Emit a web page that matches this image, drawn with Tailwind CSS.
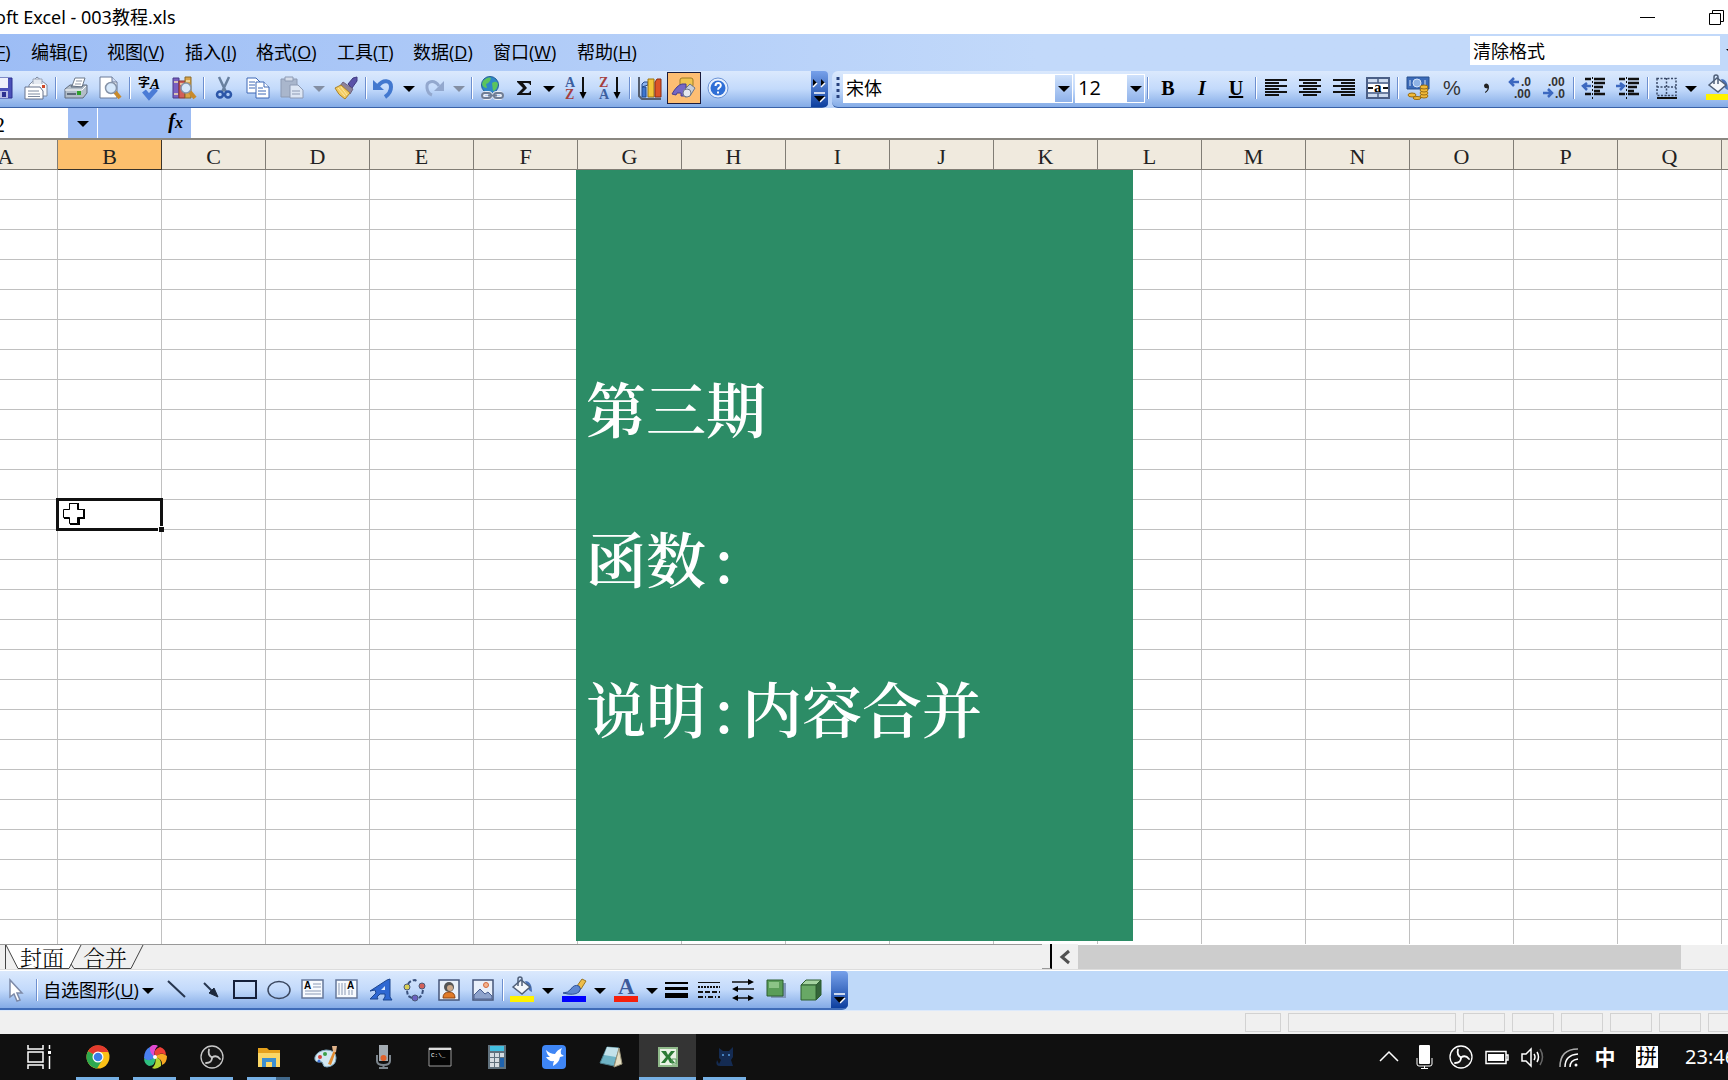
<!DOCTYPE html>
<html lang="zh-CN">
<head>
    <meta charset="UTF-8">
    <meta name="viewport" content="width=device-width, initial-scale=1.0">
    <title>Microsoft Excel - 003教程.xls</title>
    <script src="https://cdn.jsdelivr.net/npm/@tailwindcss/browser@4"></script>
</head>
<body class="h-screen flex flex-col overflow-hidden bg-white text-black font-['Open_Sans','Noto_Sans_CJK_SC',sans-serif] text-lg">
    <!-- Shared shapes -->
    <svg class="hidden">
        <symbol id="dd" viewBox="0 0 24 24"><path d="M6 10h12l-6 6z"/></symbol>
        <symbol id="bucket" viewBox="0 0 24 24">
            <path d="M15 5c5 0 7 4 7 11-3-1-5-4-5-7z" fill="#4a72b8"/>
            <path d="M3 11l8-7 9 7-8 7z" fill="#f4f7fb" stroke="#4f5f78" stroke-width="1.5"/>
            <path d="M8 10V3q0-2 2-2t2 2v7" fill="none" stroke="#4f5f78" stroke-width="1.5"/>
        </symbol>
        <symbol id="obs" viewBox="0 0 24 24">
            <circle cx="12" cy="12" r="11" fill="#161616" stroke="currentColor" stroke-width="1.3"/>
            <g fill="none" stroke="currentColor" stroke-width="1.8" stroke-linecap="round">
                <path d="M12 12.500Q7.500 10 9 4.500"/>
                <path d="M12 12.500Q16.500 9.500 20 14"/>
                <path d="M12 12.500Q12 18 6 18"/>
            </g>
        </symbol>
    </svg>

    <!-- Title bar -->
    <header class="h-[34px] shrink-0 flex items-center">
        <h1 class="-ml-[5px] whitespace-nowrap font-['Noto_Sans','Noto_Sans_CJK_SC',sans-serif] text-lg">oft Excel - 003教程.xls</h1>
        <button aria-label="最小化" class="ml-auto w-[82px]"><svg class="size-4 mx-auto" viewBox="0 0 16 16"><path d="M0 8.5h15" stroke="#000"/></svg></button>
        <button aria-label="还原" class="w-[39px] pl-5"><svg class="size-4" viewBox="0 0 16 16" fill="none" stroke="#000"><path d="M.5 4.500h11v11h-11zM3.500 4.500v-3h11v11h-3"/></svg></button>
    </header>

    <!-- Menu bar -->
    <div class="h-[37px] shrink-0 flex items-center bg-linear-to-r from-[#9dbdf5] to-[#c2d9fa] to-60% overflow-hidden">
        <nav class="grid grid-cols-[31px_76px_78px_71px_81px_76px_80px_84px_auto] pb-[2px] whitespace-nowrap [&>button]:text-left [&>button]:text-lg">
            <button class="-ml-1"><u>F</u>)</button>
            <button>编辑(<u>E</u>)</button>
            <button>视图(<u>V</u>)</button>
            <button>插入(<u>I</u>)</button>
            <button>格式(<u>O</u>)</button>
            <button>工具(<u>T</u>)</button>
            <button>数据(<u>D</u>)</button>
            <button>窗口(<u>W</u>)</button>
            <button>帮助(<u>H</u>)</button>
        </nav>
        <div class="ml-auto flex h-[29px] -mt-1 w-[258px]">
            <input aria-label="键入需要帮助的问题" value="清除格式" class="w-[250px] h-full bg-white pl-[3px] pb-[2px]">
            <button aria-label="问题列表" class="w-2 bg-[#c2d9fa] overflow-hidden"><svg class="size-6"><use href="#dd"/></svg></button>
        </div>
    </div>

    <!-- Toolbars -->
    <div class="h-[37px] shrink-0 flex overflow-hidden bg-[#b9d2f8] [&_button]:shrink-0 [&_button]:h-8 [&_button]:flex [&_button]:items-center [&_button]:justify-center [&_svg]:size-6 [&_svg]:shrink-0 [&_svg]:overflow-visible [&_hr]:w-[2px] [&_hr]:h-[22px] [&_hr]:mx-[2px] [&_hr]:shrink-0 [&_hr]:border-0 [&_hr]:border-l [&_hr]:border-r [&_hr]:border-l-[#6d8fcf] [&_hr]:border-r-white">
        <div class="-ml-[15px] w-[843px] shrink-0 flex items-center pb-[2px] rounded-r-md border-b border-[#3a62a8] bg-linear-to-b from-[#dbe9fd] via-[#c3dafb] to-[#84abe6]">
            <button class="w-[34px]" aria-label="保存"><svg viewBox="0 0 24 24"><path d="M1 2h21v20H3l-2-2z" fill="#4a50b8" stroke="#2d3190"/><path d="M5 2h13v10H5z" fill="#eef0fb"/><path d="M6 15h12v7H6z" fill="#b9bee6"/><path d="M12 16h4v5h-4z" fill="#2d3190"/></svg></button>
            <button class="w-[34px]" aria-label="电子邮件"><svg viewBox="0 0 24 24"><path d="M5 9l8-8 10 8v11H5z" fill="#f6f8fb" stroke="#7d8aa0"/><path d="M9 8V3h9v5" fill="#e4e9f1" stroke="#9aa5b8"/><path d="M18 9h3v3h-3z" fill="#cf4a2a"/><path d="M1 11h15l3 4v8H1z" fill="#fff" stroke="#66738c"/><path d="M4 15h11M4 18h12M4 20.500h12" stroke="#7d8aa0"/></svg></button>
            <hr>
            <button class="w-[34px]" aria-label="打印"><svg viewBox="0 0 24 24"><path d="M8 10l3-8h10l-3 9z" fill="#fff" stroke="#6e7a8a"/><path d="M12 5h6M11 8h6" stroke="#8b95a5"/><path d="M1 13l5-4h2l-1 2h11l1-2h4v8l-4 5H1z" fill="#b3bec9" stroke="#5f6b7c"/><path d="M1 14h17l4-4" fill="none" stroke="#fff"/><path d="M3 17h9v2H3z" fill="#5e6a7a"/><path d="M13 15h4v4h-4z" fill="#2fa02c"/></svg></button>
            <button class="w-[34px]" aria-label="打印预览"><svg viewBox="0 0 24 24"><path d="M2 1h12l5 5v16H2z" fill="#fff" stroke="#6a7a98"/><path d="M14 1v5h5" fill="#cfdaf0" stroke="#6a7a98"/><path d="M17 16l5 6" stroke="#c98a2b" stroke-width="4"/><circle cx="13" cy="12" r="5.500" fill="#d6e8fb" stroke="#8593a8" stroke-width="1.500"/></svg></button>
            <hr>
            <button class="w-[34px]" aria-label="拼写检查"><svg viewBox="0 0 24 24"><path d="M6 15l5 6 7-8" fill="none" stroke="#4b7cd6" stroke-width="5"/><text x="0" y="11" font-size="12" font-weight="700" font-family="Noto Sans CJK SC">字</text><text x="12" y="13" font-size="15" font-weight="700" font-style="italic" font-family="Liberation Serif">A</text></svg></button>
            <button class="w-[34px]" aria-label="信息检索"><svg viewBox="0 0 24 24"><path d="M1 2h6v20H1z" fill="#7a5fc0" stroke="#493a88"/><path d="M7 5h6v17H7z" fill="#d2605a" stroke="#8b332f"/><path d="M13 1h6v21h-6z" fill="#d9a348" stroke="#8a6a28"/><path d="M2 6h4M2 18h4M14 5h4M8 8h4" stroke="#f5e3b0" stroke-width="1.500"/><path d="M18 16l5 6" stroke="#c98a2b" stroke-width="4"/><circle cx="14" cy="12" r="5" fill="#d6e8fb" stroke="#8593a8" stroke-width="1.500"/></svg></button>
            <hr>
            <button class="w-[34px]" aria-label="剪切"><svg viewBox="0 0 24 24" fill="none"><path d="M7 1l7 15M17 1l-7 15" stroke="#68809f" stroke-width="2.500"/><circle cx="8" cy="18.500" r="3" stroke="#2c56a8" stroke-width="2.500"/><circle cx="16" cy="18.500" r="3" stroke="#2c56a8" stroke-width="2.500"/></svg></button>
            <button class="w-[34px]" aria-label="复制"><svg viewBox="0 0 24 24" fill="#fff" stroke="#3f68b5"><path d="M1 2h9l4 4v11H1z"/><path d="M3 6h6M3 9h6M3 12h6"/><path d="M10 6h8l5 5v11H10z"/><path d="M18 6v5h5M12 12h5M12 15h8M12 18h8"/></svg></button>
            <button class="w-[34px]" aria-label="粘贴"><svg viewBox="0 0 24 24" stroke="#8d9ab3"><path d="M1 3h16v18H1z" fill="#a9b6cc"/><path d="M5 1h8v4H5z" fill="#d3dbe9"/><path d="M10 9h8l5 5v8H10z" fill="#dde6f4"/><path d="M12 15h8M12 18h8"/></svg></button>
            <button class="w-5 text-[#848fa3]" aria-label="粘贴选项"><svg fill="currentColor"><use href="#dd"/></svg></button>
            <button class="w-[34px]" aria-label="格式刷"><svg viewBox="0 0 24 24"><path d="M14 8l5-6 4-1v4l-5 7z" fill="#5a52a8" stroke="#403a80"/><path d="M9 6l10 7-3 5-10-8z" fill="#8f8399" stroke="#6d6380"/><path d="M1 12l6-3 9 8-5 6q-7-4-10-11z" fill="#f3cc62" stroke="#a9822c"/><path d="M4 12l7 8M7 11l6 8" stroke="#fbe6a2"/></svg></button>
            <hr>
            <button class="w-[30px]" aria-label="撤消"><svg viewBox="0 0 24 24"><path d="M6 10c5-7 13-6 13 1 0 5-3 8-6 10" fill="none" stroke="#4278cf" stroke-width="4"/><path d="M1 4v10h11z" fill="#4278cf"/></svg></button>
            <button class="w-5" aria-label="撤消列表"><svg><use href="#dd"/></svg></button>
            <button class="w-[30px]" aria-label="恢复"><svg viewBox="0 0 24 24"><path d="M17 10C12 3 4 5 5 12c.5 4 2 6 5 7" fill="none" stroke="#93a8ce" stroke-width="3"/><path d="M22 5v10H12z" fill="#93a8ce"/></svg></button>
            <button class="w-5 text-[#848fa3]" aria-label="恢复列表"><svg fill="currentColor"><use href="#dd"/></svg></button>
            <hr>
            <button class="w-[34px]" aria-label="超链接"><svg viewBox="0 0 24 24"><circle cx="10" cy="9" r="8.500" fill="#2f86c8" stroke="#226096"/><path d="M3 5q5-5 8-3-1 5-5 6l1 4q-4 0-5-4zM12 7q5-3 6 1-1 6-5 7z" fill="#5cc45c"/><g fill="none" stroke="#e8edf6" stroke-width="4"><rect x="3" y="17" width="8" height="5" rx="2.500"/><rect x="14" y="17" width="8" height="5" rx="2.500"/></g><g fill="none" stroke="#6f7d95" stroke-width="2"><rect x="2" y="17" width="9" height="5" rx="2.500"/><rect x="14" y="17" width="9" height="5" rx="2.500"/><path d="M8 19.500h9"/></g></svg></button>
            <button class="w-[30px]" aria-label="自动求和"><svg viewBox="0 0 24 24"><path d="M5 5h14v4h-1q0-2-3-2h-4l4 5-5 5h6q2 0 2-2h1v4H5v-1l6-6-6-6z" fill="#111"/></svg></button>
            <button class="w-5" aria-label="函数列表"><svg><use href="#dd"/></svg></button>
            <button class="w-[34px]" aria-label="升序排序"><svg viewBox="0 0 24 24" font-family="Liberation Serif" font-weight="700" font-size="14"><text x="1" y="11" fill="#3c5f9f">A</text><text x="1" y="23" fill="#a53f3f">Z</text><path d="M19 1v18" stroke="#111" stroke-width="2" fill="none"/><path d="M15.500 16h7L19 23z"/></svg></button>
            <button class="w-[34px]" aria-label="降序排序"><svg viewBox="0 0 24 24" font-family="Liberation Serif" font-weight="700" font-size="14"><text x="1" y="11" fill="#a53f3f">Z</text><text x="1" y="23" fill="#3c5f9f">A</text><path d="M19 1v18" stroke="#111" stroke-width="2" fill="none"/><path d="M15.500 16h7L19 23z"/></svg></button>
            <hr>
            <button class="w-[34px]" aria-label="图表向导"><svg viewBox="0 0 24 24"><path d="M1 1v19l3 3h19" fill="none" stroke="#555f70" stroke-width="2"/><path d="M4 11h4v10H4z" fill="#3d76cf" stroke="#234a8c"/><path d="M4 11V8l2-2h4v3z" fill="#8db4ee" stroke="#234a8c"/><path d="M10 3h6v18h-6z" fill="#f3c63a" stroke="#9b7412"/><path d="M17 6l2-3h4v18h-6z" fill="#dd5428" stroke="#8a2d10"/></svg></button>
            <button class="w-[34px] border border-[#1c1c3c] bg-[#fdbe73]" aria-label="绘图" aria-pressed="true"><svg viewBox="0 0 24 24"><rect x="8" y="2" width="13" height="9" rx="2" fill="#efc550" stroke="#9b7b26"/><path d="M0 18Q5 9 10 8h4v12H9v-3H5l-1 2z" fill="#7568c4" stroke="#483e90"/><path d="M12 14l6-6 5 4-5 8-5 1z" fill="#c6cedb" stroke="#6c7688"/><circle cx="15" cy="17" r="4" fill="#e4e8ef" stroke="#6c7688"/></svg></button>
            <button class="w-[34px]" aria-label="帮助"><svg viewBox="0 0 24 24"><circle cx="12" cy="12" r="10" fill="#e7f0fd" stroke="#6b93d6"/><circle cx="12" cy="12" r="7.500" fill="#2f6fd6"/><path d="M9.500 10q0-3 2.700-3t2.600 2.500q0 1.500-1.700 2.300-1 .6-1 1.900M12 15.500v2" stroke="#fff" stroke-width="2" fill="none"/></svg></button>
            <button class="ml-auto h-[36px]! -mb-[2px] w-[17px] rounded-r bg-linear-to-b from-[#77a1ea] to-[#0c3f9f]" aria-label="工具栏选项"><svg viewBox="0 0 24 30" class="h-[30px]!"><path d="M5 5l4 4-4 4zM13 5l4 4-4 4z"/><path d="M5 13l4-4M13 13l4-4M6 19h11" stroke="#fff" stroke-width="1.500"/><path d="M6 22h11l-5.500 6z"/><path d="M12 28l5-5" stroke="#fff" stroke-width="1.500"/></svg></button>
        </div>
        <div class="ml-1 flex-1 min-w-0 overflow-hidden flex items-center pb-[2px] rounded-l-md border-b border-[#3a62a8] bg-linear-to-b from-[#dbe9fd] via-[#c3dafb] to-[#84abe6]">
            <span class="w-[11px] shrink-0"><svg class="w-[11px]!" viewBox="0 0 11 24"><path d="M6 1v21" stroke="#27417c" stroke-width="3" stroke-dasharray="3 3"/></svg></span>
            <div class="relative w-[230px] shrink-0 h-[29px] bg-white">
                <select aria-label="字体" class="appearance-none size-full pl-[3px] pb-[2px]"><option>宋体</option></select>
                <span class="absolute right-px top-px h-[27px] w-[17px] flex items-center justify-center bg-linear-to-b from-[#cfe1fb] to-[#8fb2ea] pointer-events-none"><svg><use href="#dd"/></svg></span>
            </div>
            <div class="relative ml-[2px] w-[70px] shrink-0 h-[29px] bg-white">
                <select aria-label="字号" class="appearance-none size-full pl-[3px] pb-[2px] text-xl"><option>12</option></select>
                <span class="absolute right-px top-px h-[27px] w-[17px] flex items-center justify-center bg-linear-to-b from-[#cfe1fb] to-[#8fb2ea] pointer-events-none"><svg><use href="#dd"/></svg></span>
            </div>
            <hr>
            <button class="w-[34px] font-['Liberation_Serif',serif] text-xl" aria-label="加粗"><b>B</b></button>
            <button class="w-[34px] font-['Liberation_Serif',serif] font-bold text-xl" aria-label="倾斜"><i>I</i></button>
            <button class="w-[34px] font-['Liberation_Serif',serif] font-bold text-xl" aria-label="下划线"><u>U</u></button>
            <hr>
            <button class="w-[34px]" aria-label="左对齐"><svg viewBox="0 0 24 24" stroke="#111" stroke-width="2"><path d="M1 4h22M1 7h14M1 10h22M1 13h14M1 16h22M1 19h14"/></svg></button>
            <button class="w-[34px]" aria-label="居中"><svg viewBox="0 0 24 24" stroke="#111" stroke-width="2"><path d="M1 4h22M5 7h14M1 10h22M5 13h14M1 16h22M5 19h14"/></svg></button>
            <button class="w-[34px]" aria-label="右对齐"><svg viewBox="0 0 24 24" stroke="#111" stroke-width="2"><path d="M1 4h22M9 7h14M1 10h22M9 13h14M1 16h22M9 19h14"/></svg></button>
            <button class="w-[34px]" aria-label="合并及居中"><svg viewBox="0 0 24 24"><path d="M1 2h22v20H1z" fill="#cbd9ee" stroke="#4b5f86" stroke-width="2"/><path d="M1 7h22M1 17h22M12 2v5M12 17v5" stroke="#4b5f86" stroke-width="1.500"/><path d="M2 8h20v8H2z" fill="#fff"/><path d="M2 12h5M17 12h5" stroke="#111" stroke-width="2"/><text x="8" y="16" font-size="15" font-weight="700" font-family="Liberation Serif">a</text></svg></button>
            <hr>
            <button class="w-[34px]" aria-label="货币样式"><svg viewBox="0 0 24 24"><path d="M1 1h22v12H1z" fill="#3b6ab8" stroke="#28508f"/><circle cx="11" cy="7" r="4" fill="#8fb3e6" stroke="#d2e2f8"/><path d="M4 4v6M19 4v6" stroke="#d2e2f8"/><g fill="#f0b93a" stroke="#9a6d12"><ellipse cx="18" cy="20" rx="4" ry="2"/><ellipse cx="18" cy="17" rx="4" ry="2"/><ellipse cx="18" cy="14" rx="4" ry="2"/><ellipse cx="18" cy="11" rx="4" ry="2"/><ellipse cx="6" cy="19" rx="4" ry="2"/><ellipse cx="11" cy="22" rx="4" ry="1.500"/></g></svg></button>
            <button class="w-[34px] text-[#333] text-xl font-['Liberation_Sans',sans-serif]" aria-label="百分比样式">%</button>
            <button class="w-[34px]" aria-label="千位分隔样式"><svg viewBox="0 0 24 24"><path d="M11 16q3-2 2.500-4-3 1-3.500-2 0-2.500 2.500-2.500 2.500.500 2.500 3.500 0 4-4 6z" fill="#222"/></svg></button>
            <button class="w-[34px]" aria-label="增加小数位数"><svg viewBox="0 0 24 24" font-family="Liberation Sans" font-size="12" font-weight="700" fill="#333"><text x="13" y="10">.0</text><text x="6" y="22">.00</text><path d="M11 6H3M6 2L2 6l4 4" stroke="#3c68c0" stroke-width="2.500" fill="none"/></svg></button>
            <button class="w-[34px]" aria-label="减少小数位数"><svg viewBox="0 0 24 24" font-family="Liberation Sans" font-size="12" font-weight="700" fill="#333"><text x="6" y="10">.00</text><text x="13" y="22">.0</text><path d="M1 17h8M6 13l4 4-4 4" stroke="#3c68c0" stroke-width="2.500" fill="none"/></svg></button>
            <hr>
            <button class="w-[34px]" aria-label="减少缩进量"><svg viewBox="0 0 24 24"><path d="M3 3h6M12 3h11M12 7h11M12 11h9M12 15h6M3 18h6M12 18h11" stroke="#111" stroke-width="2.500"/><path d="M10.500 1v22" stroke="#111" stroke-dasharray="2 2"/><path d="M9 10H2M5 7l-4 3 4 4" stroke="#3c68c0" stroke-width="2.500" fill="none"/></svg></button>
            <button class="w-[34px]" aria-label="增加缩进量"><svg viewBox="0 0 24 24"><path d="M3 3h6M12 3h11M12 7h11M12 11h9M12 15h6M3 18h6M12 18h11" stroke="#111" stroke-width="2.500"/><path d="M10.500 1v22" stroke="#111" stroke-dasharray="2 2"/><path d="M0 10h7M4 7l4 3-4 4" stroke="#3c68c0" stroke-width="2.500" fill="none"/></svg></button>
            <hr>
            <button class="w-[30px]" aria-label="边框"><svg viewBox="0 0 24 24" fill="none"><path d="M3 2.500h19v17H3zM12.500 2v18M3 11h19" stroke="#3a4a68" stroke-width="1.500" stroke-dasharray="2 1.500"/><path d="M3 22h20" stroke="#111" stroke-width="2"/></svg></button>
            <button class="w-5" aria-label="边框选项"><svg><use href="#dd"/></svg></button>
            <button class="w-[34px]" aria-label="填充颜色"><svg viewBox="0 0 24 24"><use href="#bucket" y="-2"/><path d="M0 18h24v6H0z" fill="#fff200"/></svg></button>
        </div>
    </div>

    <!-- Formula bar -->
    <div class="h-[30px] shrink-0 flex bg-[#9dbcf3] font-['Liberation_Serif',serif] text-[22px] overflow-hidden">
        <input aria-label="名称框" value="2" class="w-[68px] -indent-[6px] bg-white pt-1">
        <button aria-label="名称列表" class="w-[29px] flex items-center justify-center"><svg class="size-6"><use href="#dd"/></svg></button>
        <button aria-label="插入函数" class="w-[94px] border-l border-white text-right pr-2 pb-px leading-none text-[20px] font-bold"><i>f<span class="text-base">x</span></i></button>
        <input aria-label="编辑栏" class="flex-1 min-w-0 bg-white">
    </div>

    <!-- Worksheet -->
    <main class="relative flex-1 min-h-0 overflow-hidden border-t-2 border-[#8a8780]">
        <table id="grid" class="-ml-[46px] w-[2704px] table-fixed border-separate border-spacing-0">
            <thead><tr id="cols"></tr></thead>
            <tbody id="rows"></tbody>
        </table>
        <section class="absolute left-[576px] top-[30px] w-[557px] h-[771px] bg-[#2c8c66] pt-[162px] pl-[10px] text-white font-semibold text-[60px] leading-[150px] whitespace-nowrap font-['Noto_Serif_CJK_SC','Noto_Sans_CJK_SC',serif] [&_span]:inline-block [&_span]:w-9 [&_span]:text-center">
            <p>第三期</p>
            <p>函数<span>:</span></p>
            <p>说明<span>:</span>内容合并</p>
        </section>
        <div class="absolute left-14 top-[358px] w-[107px] h-[33px] border-3 border-[#111]">
            <span class="absolute -right-[4px] -bottom-[4px] size-[6px] bg-[#111] border-t border-l border-white"></span>
            <svg class="absolute left-[3px] top-px size-6" viewBox="0 0 24 24"><path d="M7 1h10v6h6v10h-5v6H8v-6H2V7h5z" fill="#000"/><path d="M7.500 1.500h8v6h6v8h-6v6h-8v-6h-6v-8h6z" fill="#fff" stroke="#000"/></svg>
        </div>
    </main>

    <!-- Sheet tabs and horizontal scroll bar -->
    <div class="h-[25px] shrink-0 flex bg-[#f0f0f0]">
        <nav class="relative w-[60.3%] border-t border-[#999] flex font-['Noto_Serif_CJK_SC','Noto_Sans_CJK_SC',serif] font-light text-[22px] leading-6">
            <svg class="absolute left-0 top-0 w-[150px] h-6" viewBox="0 0 150 24" fill="none" stroke="#444"><path d="M6 0l12 23.500h51L81 0z" fill="#fff" stroke="none"/><path d="M5.500 0v24M6 0l12 23.500h51L81 0M71 19l3 4.500h57L143 0"/></svg>
            <button class="relative ml-5 h-6 w-[63px] text-left">封面</button>
            <button class="relative h-6 w-[62px] text-left">合并</button>
        </nav>
        <div class="w-[10px] shrink-0 border-r-2 border-black bg-[#f0f0f0] border-b border-b-[#999]"></div>
        <button aria-label="向左滚动" class="w-[26px] shrink-0 flex items-center justify-center"><svg class="size-4" viewBox="0 0 16 16"><path d="M12 2L5 8l7 6" fill="none" stroke="#505050" stroke-width="3"/></svg></button>
        <div class="flex-1 border-t border-white"><div class="w-[92.8%] h-full bg-[#cdcdcd]"></div></div>
    </div>
    <div class="h-[2px] shrink-0 bg-white border-t border-[#ddd]"></div>

    <!-- Drawing toolbar -->
    <div class="h-10 shrink-0 flex bg-[#bfd9f9] border-b border-[#dce9fb] overflow-hidden [&_button]:shrink-0 [&_button]:h-8 [&_button]:flex [&_button]:items-center [&_button]:justify-center [&_svg]:size-6 [&_svg]:shrink-0 [&_svg]:overflow-visible [&_hr]:w-[2px] [&_hr]:h-[22px] [&_hr]:mx-[2px] [&_hr]:shrink-0 [&_hr]:border-0 [&_hr]:border-l [&_hr]:border-r [&_hr]:border-l-[#6d8fcf] [&_hr]:border-r-white">
        <div class="w-[848px] shrink-0 flex items-center rounded-r-md border-b-2 border-[#3f6cb8] bg-linear-to-b from-[#dbe9fd] via-[#c3dafb] to-[#84abe6]">
            <button class="w-[34px]" aria-label="选择对象"><svg viewBox="0 0 24 24"><path d="M5 2v17l4-3 3 7 3-1-3-7h5z" fill="#fff" stroke="#7d8aa8" stroke-width="1.500"/></svg></button>
            <hr>
            <button class="w-[120px] whitespace-nowrap">自选图形(<u>U</u>)<svg class="-mx-[3px]"><use href="#dd"/></svg></button>
            <button class="w-[34px]" aria-label="直线"><svg viewBox="0 0 24 24"><path d="M3 3l17 16" stroke="#27364f" stroke-width="2"/></svg></button>
            <button class="w-[34px]" aria-label="箭头"><svg viewBox="0 0 24 24"><path d="M5 5l8 8" stroke="#27364f" stroke-width="2"/><path d="M19 19l-9-4 5-5z" fill="#1c283c" stroke="#1c283c"/></svg></button>
            <button class="w-[34px]" aria-label="矩形"><svg viewBox="0 0 24 24"><path d="M1 3h22v17H1z" fill="none" stroke="#15203a" stroke-width="2"/></svg></button>
            <button class="w-[34px]" aria-label="椭圆"><svg viewBox="0 0 24 24"><ellipse cx="12" cy="12" rx="11" ry="8.500" fill="none" stroke="#3a475f" stroke-width="1.500"/></svg></button>
            <button class="w-[34px]" aria-label="文本框"><svg viewBox="0 0 24 24"><path d="M1 2h21v18H1z" fill="#f7fafe" stroke="#66789a" stroke-width="1.500"/><path d="M12 6h8M12 9h8M4 13h16M4 16h16" stroke="#8b9ab5"/><text x="3" y="11" font-size="10" font-weight="700" font-family="Liberation Sans">A</text></svg></button>
            <button class="w-[34px]" aria-label="竖排文本框"><svg viewBox="0 0 24 24"><path d="M1 2h21v18H1z" fill="#f7fafe" stroke="#66789a" stroke-width="1.500"/><path d="M4 5v12M7 5v12M10 5v12M14 12v5M17 12v5" stroke="#8b9ab5"/><text x="12" y="11" font-size="10" font-weight="700" font-family="Liberation Sans">A</text></svg></button>
            <button class="w-[34px]" aria-label="插入艺术字"><svg viewBox="0 0 24 24"><path d="M1 13L18 2l3-1v18l2 3h-9l2-3v-3h-5l-3 3 1 2H1l6-6-1-3z" fill="#2f68d2" stroke="#1d468f"/><path d="M12 12l4-4v4z" fill="#dbe9fd"/></svg></button>
            <button class="w-[34px]" aria-label="插入组织结构图"><svg viewBox="0 0 24 24"><path d="M5 6q3-4 7-4l3 2M20 12l-1 5-3 3M9 20l-4-2-1-5" fill="none" stroke="#39507c" stroke-width="2" stroke-dasharray="4 2"/><circle cx="4" cy="9" r="3" fill="#d9cf56" stroke="#4a5878"/><circle cx="19" cy="8" r="3" fill="#d2605a" stroke="#4a5878"/><circle cx="12" cy="20" r="3" fill="#6a60c0" stroke="#4a5878"/></svg></button>
            <button class="w-[34px]" aria-label="插入剪贴画"><svg viewBox="0 0 24 24"><path d="M2 2h20v20H2z" fill="#e9f0fa" stroke="#46567a" stroke-width="1.500"/><circle cx="12" cy="9" r="5" fill="#555"/><circle cx="13" cy="10" r="3" fill="#cda98a"/><path d="M6 20q0-6 6-6t6 6z" fill="#e07a28" stroke="#8c4310"/></svg></button>
            <button class="w-[34px]" aria-label="插入图片"><svg viewBox="0 0 24 24"><path d="M2 2h20v20H2z" fill="#e9f0fa" stroke="#46567a" stroke-width="1.500"/><path d="M3 17l6-6 5 5 3-2 4 4v3H3z" fill="#8ea3cc" stroke="#4a5f90"/><circle cx="15" cy="7" r="2.500" fill="#f2b48f" stroke="#d4683a"/></svg></button>
            <hr>
            <button class="w-8" aria-label="填充颜色"><svg viewBox="0 0 24 24"><use href="#bucket" y="-2"/><path d="M0 18h24v6H0z" fill="#fff200"/></svg></button>
            <button class="w-5" aria-label="填充选项"><svg><use href="#dd"/></svg></button>
            <button class="w-8" aria-label="线条颜色"><svg viewBox="0 0 24 24"><path d="M15 8l5-7 4 2-5 8z" fill="#edbd4a" stroke="#9a7420"/><path d="M1 15q5 0 8-4 3-5 8-3 3 3 0 6-5 4-16 1z" fill="#5e86cf" stroke="#2f5296"/><path d="M0 18h24v6H0z" fill="#00f"/></svg></button>
            <button class="w-5" aria-label="线条选项"><svg><use href="#dd"/></svg></button>
            <button class="w-8" aria-label="字体颜色"><svg viewBox="0 0 24 24"><text x="4" y="16" font-size="23" font-weight="700" font-family="Liberation Serif" fill="#3b5a9a">A</text><path d="M0 18h24v6H0z" fill="#f5200c"/></svg></button>
            <button class="w-5" aria-label="字体颜色选项"><svg><use href="#dd"/></svg></button>
            <button class="w-[30px]" aria-label="线型"><svg viewBox="0 0 24 24"><path d="M0 4h23v2H0zM0 9h23v3H0zM0 15h23v5H0z"/></svg></button>
            <button class="w-[34px]" aria-label="虚线线型"><svg viewBox="0 0 24 24" stroke="#111"><path d="M1 4.500h22"/><path d="M1 9h22" stroke-width="2" stroke-dasharray="2 1"/><path d="M1 14h22" stroke-width="2" stroke-dasharray="5 2"/><path d="M1 19h22" stroke-width="2" stroke-dasharray="5 2 1 2"/></svg></button>
            <button class="w-[34px]" aria-label="箭头样式"><svg viewBox="0 0 24 24"><path d="M1 4h20M3 11h20M3 20h18" stroke="#111" stroke-width="1.500"/><path d="M23 4l-6-3v6zM1 11l6-3v6zM1 20l6-3v6zM23 20l-6-3v6z"/></svg></button>
            <button class="w-[34px]" aria-label="阴影样式"><svg viewBox="0 0 24 24"><path d="M6 5h15v15H6z" fill="#7f96ba"/><path d="M2 2h16v16H2z" fill="#5a9d58" stroke="#2d5f30"/><path d="M4 4h10v6H4z" fill="#8cc487"/></svg></button>
            <button class="w-[34px]" aria-label="三维效果样式"><svg viewBox="0 0 24 24" stroke="#2d5f30"><path d="M2 7l5-5h15l-5 5z" fill="#a5d3a0"/><path d="M17 7l5-5v15l-5 5z" fill="#35653a"/><path d="M2 7h15v15H2z" fill="#68a865"/></svg></button>
            <button class="ml-auto h-full! w-[17px] rounded-r bg-linear-to-b from-[#77a1ea] to-[#0c3f9f]" aria-label="工具栏选项"><svg viewBox="0 0 24 30" class="h-[30px]!"><path d="M6 19h11" stroke="#fff" stroke-width="1.500"/><path d="M6 22h11l-5.500 6z"/><path d="M12 28l5-5" stroke="#fff" stroke-width="1.500"/></svg></button>
        </div>
    </div>

    <!-- Status bar -->
    <footer class="h-[23px] shrink-0 flex justify-end gap-[7px] py-[2px] bg-[#f0f0f0] overflow-hidden [&>span]:border [&>span]:border-[#d2d2d2] [&>span]:shrink-0">
        <span class="w-9"></span>
        <span class="w-[168px]"></span>
        <span class="w-[42px]"></span>
        <span class="w-[42px]"></span>
        <span class="w-[42px]"></span>
        <span class="w-[42px]"></span>
        <span class="w-[42px]"></span>
        <span class="w-[42px] -mr-[22px]"></span>
    </footer>

    <!-- Windows taskbar -->
    <div class="h-[46px] shrink-0 flex bg-[#101010] text-white overflow-hidden">
        <div class="flex [&>button]:w-[57px] [&>button]:relative [&>button]:flex [&>button]:items-center [&>button]:justify-center [&_svg]:size-6 [&_i]:absolute [&_i]:bottom-0 [&_i]:h-[3px] [&_i]:w-[43px] [&_i]:bg-[#76b0e4]">
            <button class="ml-[10px] mr-[2px]" aria-label="任务视图"><svg viewBox="0 0 24 24" fill="none" stroke="#fff" stroke-width="1.500"><path d="M1 0v4h15V0M1 7h15v10H1zM1 24v-4h15v4M22.500 0v4M22.500 11v13"/><path d="M21 6h3v3h-3z" fill="#fff" stroke="none"/></svg></button>
            <button aria-label="Chrome"><svg viewBox="0 0 24 24"><circle cx="12" cy="12" r="11.500" fill="#fbc116"/><path d="M12 12L2 6.300A11.500 11.500 0 0 1 22.500 7H12z" fill="#e33b2e"/><path d="M12 12L2 6.300A11.500 11.500 0 0 0 11 23.500l5.500-9z" fill="#2da94f"/><circle cx="12" cy="12" r="5.500" fill="#fff"/><circle cx="12" cy="12" r="4.300" fill="#3b7de8"/></svg><i></i></button>
            <button aria-label="照片"><svg viewBox="0 0 24 24"><path d="M12 12Q4 10 7 2q4-4 8-1-5 4-3 11z" fill="#e24ad0"/><path d="M12 12Q10 4 17 2q6 2 6 8-5-4-11 2z" fill="#ee4038"/><path d="M12 12q6-6 12-1 0 7-5 9 1-6-7-8z" fill="#f7a823"/><path d="M12 12q7 1 6 9-5 4-9 2 5-4 3-11z" fill="#b5d632"/><path d="M12 12q1 9-6 9-5-2-5-8 5 4 11-1z" fill="#2fc080"/><path d="M12 12q-6 6-11 1 0-8 6-11-1 6 5 10z" fill="#4a80f0"/><circle cx="12" cy="12" r="2" fill="#fff"/></svg><i></i></button>
            <button class="text-[#c8c8c8]" aria-label="OBS"><svg><use href="#obs"/></svg><i></i></button>
            <button aria-label="文件资源管理器"><svg viewBox="0 0 24 24"><path d="M1 3h9l2 2h11v17H1z" fill="#e5a11c"/><path d="M1 8h22v14H1z" fill="#fbd766"/><path d="M5 13h14v9h-4v-5H9v5H5z" fill="#3c8fd0"/></svg><i class="border-r-[14px] border-[#41688a]"></i></button>
            <button aria-label="画图"><svg viewBox="0 0 24 24"><path d="M12 5q10 0 10 8t-9 9q-4 0-4-3t-4-2q-5 0-4-5 2-6 11-7z" fill="#d2e8f3" stroke="#7fa8bf"/><circle cx="6" cy="12" r="2" fill="#d4443b"/><circle cx="11" cy="9" r="2" fill="#3aa04a"/><circle cx="5" cy="16" r="1.500" fill="#3e6fd0"/><path d="M14 19l6-14 2 1-5 14z" fill="#df8b31"/><path d="M18 1h5l-1 6h-3z" fill="#e2b48a"/></svg></button>
            <button aria-label="录音机"><svg viewBox="0 0 24 24"><path d="M8 0h9v16H8z" fill="#a3abb2"/><path d="M6 10v6q0 4 6.500 4t6.500-4v-6M12.500 20v3M8 23h9" fill="none" stroke="#7c858d" stroke-width="2"/><circle cx="12.500" cy="13" r="3" fill="#e0622b"/></svg></button>
            <button aria-label="命令提示符"><svg viewBox="0 0 24 24"><path d="M1 3h22v18H1z" fill="#050505" stroke="#9a9a9a"/><path d="M1 3h22v2H1z" fill="#ddd"/><text x="3" y="12" font-size="6" fill="#fff" font-family="Liberation Mono">C:\_</text></svg></button>
            <button aria-label="计算器"><svg viewBox="0 0 24 24"><path d="M3 0h18v24H3z" fill="#60717d"/><path d="M5 1h14v5H5z" fill="#42bfe0"/><path d="M5 8h4v4H5zM10 8h4v4h-4zM15 8h4v4h-4zM5 13h4v4H5zM10 13h4v4h-4zM5 18h4v4H5zM10 18h4v4h-4z" fill="#d6dde2"/><path d="M15 13h4v9h-4z" fill="#1f63ae"/></svg></button>
            <button aria-label="迅雷"><svg viewBox="0 0 24 24"><rect width="24" height="24" rx="4" fill="#3f86f5"/><path d="M4 5q4 4 9 4 2-4 7-6-2 3-1 6l3 2-4 1q-1 6-7 9 0-3 1-5-5 1-8-4h4Q5 10 4 5z" fill="#fff"/></svg></button>
            <button aria-label="记事本"><svg viewBox="0 0 24 24"><path d="M8 2l12 1-5 18-14-3z" fill="#6fb4c6" stroke="#4d7f8c"/><path d="M8 2l12 1-3 9-12-2z" fill="#c3e2ea"/><path d="M20 3l3 16-8 3z" fill="#e4dec3" stroke="#9a9479"/></svg></button>
            <button class="bg-[#343434]" aria-label="Excel"><svg viewBox="0 0 24 24"><path d="M3 3h18v18H3z" fill="#e8f2e4" stroke="#8fb98a" stroke-width="2"/><path d="M5 6h5l2 4 3-4h4l-5 6 5 6h-5l-2-4-3 4H5l5-6z" fill="#2b7a34"/><path d="M16 14h4v5h-4z" fill="none" stroke="#5b9a5e"/></svg><i class="w-full!"></i></button>
            <button aria-label="小黑猫"><svg viewBox="0 0 24 24"><path d="M6 3l4 3h6l4-4v10l-2 3 2 6H7q-5 0-3-6l2 4 2-4-2-2z" fill="#142b52"/><path d="M9 9h2v2H9zM15 9h2v2h-2z" fill="#4580bd"/></svg><i></i></button>
        </div>
        <div class="ml-auto flex [&>button]:w-9 [&>button]:flex [&>button]:items-center [&>button]:justify-center [&_svg]:size-6">
            <button aria-label="显示隐藏的图标"><svg viewBox="0 0 24 24"><path d="M3 16l9-9 9 9" fill="none" stroke="#fff" stroke-width="1.500"/></svg></button>
            <button aria-label="麦克风"><svg viewBox="0 0 24 24"><rect x="6" width="11" height="19" rx="1" fill="#fff"/><path d="M4 13v6q0 2 2 2h11q2 0 2-2v-6M11.500 21v3M8 23.500h7" fill="none" stroke="#fff"/></svg></button>
            <button aria-label="OBS 状态"><svg><use href="#obs"/></svg></button>
            <button aria-label="电池"><svg viewBox="0 0 24 24"><path d="M1 6.500h20v12H1zM21 10h2v5h-2" fill="none" stroke="#fff" stroke-width="1.500"/><path d="M3 9h16v7H3z" fill="#fff"/></svg></button>
            <button aria-label="音量"><svg viewBox="0 0 24 24" fill="none" stroke="#fff" stroke-width="1.500"><path d="M1 9h4l5-5v17l-5-5H1zM13 9q2 3 0 6M16 7q3 5 0 10"/><path d="M19 4q5 8 0 16" stroke="#666"/></svg></button>
            <button aria-label="网络"><svg viewBox="0 0 24 24" fill="none" stroke="#fff" stroke-width="1.500"><circle cx="19" cy="20" r="1.500" fill="#fff" stroke="none"/><path d="M13 22q0-7 8-8M8 22q0-12 13-13"/><path d="M3 22Q3 4 21 4" stroke="#aaa"/></svg></button>
            <button class="text-[21px] font-bold">中</button>
            <button class="w-12!"><span class="size-[22px] bg-white text-black text-[20px] leading-[21px]">拼</span></button>
            <time class="w-[57px] pl-[14px] text-xl leading-[46px] whitespace-nowrap font-['Noto_Sans',sans-serif]">23:46</time>
        </div>
    </div>

    <script>
        const cols = document.getElementById('cols');
        const rows = document.getElementById('rows');
        const letters = 'ABCDEFGHIJKLMNOPQRSTUVWXYZ'.split('');
        const headClass = "h-[30px] pt-1 border-r border-b border-[#817d75] bg-[#f0eade] font-normal text-[22px] leading-6 text-[#222] font-['Liberation_Serif',serif]";
        const activeClass = "h-[30px] pt-1 border-r border-b border-[#3a3328] bg-[#fdc06d] font-normal text-[22px] leading-6 text-[#222] font-['Liberation_Serif',serif]";

        letters.forEach((letter) => {
            const th = document.createElement('th');
            th.scope = 'col';
            th.className = letter === 'B' ? activeClass : headClass;
            th.textContent = letter;
            cols.appendChild(th);
        });

        for (let r = 0; r < 50; r++) {
            const tr = document.createElement('tr');
            letters.forEach(() => {
                const td = document.createElement('td');
                td.className = 'h-[30px] p-0 border-r border-b border-[#c0c0c0]';
                tr.appendChild(td);
            });
            rows.appendChild(tr);
        }
    </script>
</body>
</html>
